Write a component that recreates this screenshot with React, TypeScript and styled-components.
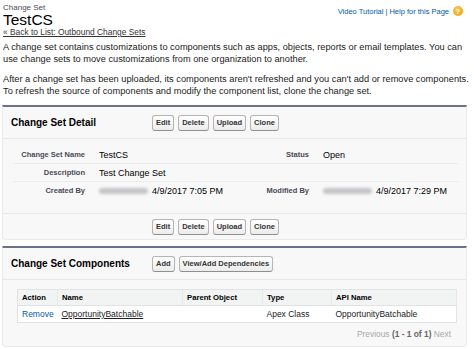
import React from "react";
import styled, { createGlobalStyle } from "styled-components";

const GlobalStyle = createGlobalStyle`
  body {
    margin: 0;
    background: #fff;
    font-family: "Liberation Sans", Arial, sans-serif;
    color: #000;
  }
`;

const detailRows = [
  { label: "Change Set Name", value: "TestCS", label2: "Status", value2: "Open" },
  { label: "Description", value: "Test Change Set", label2: "", value2: "" },
  {
    label: "Created By",
    value: "4/9/2017 7:05 PM",
    label2: "Modified By",
    value2: "4/9/2017 7:29 PM",
    blurred: true,
  },
];

const detailButtons = ["Edit", "Delete", "Upload", "Clone"];

const columns = [
  { title: "Action", width: 40 },
  { title: "Name", width: 125 },
  { title: "Parent Object", width: 80 },
  { title: "Type", width: 69 },
  { title: "API Name" },
];

const App: React.FC = () => {
  return (
    <Page>
      <GlobalStyle />
      <PageHeader>
        <div>
          <Crumb>Change Set</Crumb>
          <Title>TestCS</Title>
          <BackLink href="#">« Back to List: Outbound Change Sets</BackLink>
        </div>
        <HelpLinks>
          <HelpLink href="#">Video Tutorial</HelpLink>
          <span>|</span>
          <HelpLink href="#">Help for this Page</HelpLink>
          <HelpIcon>?</HelpIcon>
        </HelpLinks>
      </PageHeader>

      <Intro>
        A change set contains customizations to components such as apps, objects, reports or email templates. You can
        <br />
        use change sets to move customizations from one organization to another.
      </Intro>
      <Intro>
        After a change set has been uploaded, its components aren't refreshed and you can't add or remove components.
        <br />
        To refresh the source of components and modify the component list, clone the change set.
      </Intro>

      <Panel>
        <PanelHeader>
          <PanelTitle>Change Set Detail</PanelTitle>
          <ButtonGroup>
            {detailButtons.map((b) => (
              <Button key={b}>{b}</Button>
            ))}
          </ButtonGroup>
        </PanelHeader>
        <DetailBody>
          <DetailGrid>
            {detailRows.map((row, i) => {
              const last = i === detailRows.length - 1;
              return (
                <React.Fragment key={row.label}>
                  <LabelCell $last={last}>{row.label}</LabelCell>
                  <DataCell $last={last}>
                    {row.blurred && <BlurredName />}
                    {row.value}
                  </DataCell>
                  <LabelCell $last={last}>{row.label2}</LabelCell>
                  <DataCell $last={last}>
                    {row.blurred && <BlurredName />}
                    {row.value2}
                  </DataCell>
                </React.Fragment>
              );
            })}
          </DetailGrid>
        </DetailBody>
        <PanelFooter>
          <ButtonGroup>
            {detailButtons.map((b) => (
              <Button key={b}>{b}</Button>
            ))}
          </ButtonGroup>
        </PanelFooter>
      </Panel>

      <Panel $gap={6}>
        <PanelHeader>
          <PanelTitle>Change Set Components</PanelTitle>
          <ButtonGroup>
            <Button>Add</Button>
            <Button>View/Add Dependencies</Button>
          </ButtonGroup>
        </PanelHeader>
        <ListBody>
          <ListTable>
            <colgroup>
              {columns.map((c) => (
                <col key={c.title} style={c.width ? { width: c.width } : undefined} />
              ))}
            </colgroup>
            <thead>
              <tr>
                {columns.map((c) => (
                  <HeadCell key={c.title}>{c.title}</HeadCell>
                ))}
              </tr>
            </thead>
            <tbody>
              <tr>
                <Cell>
                  <ActionLink href="#">Remove</ActionLink>
                </Cell>
                <Cell>
                  <NameLink href="#">OpportunityBatchable</NameLink>
                </Cell>
                <Cell />
                <Cell>Apex Class</Cell>
                <Cell>OpportunityBatchable</Cell>
              </tr>
            </tbody>
          </ListTable>
          <Pager>
            <PagerMuted>Previous</PagerMuted> <PagerCount>(1 - 1 of 1)</PagerCount>{" "}
            <PagerMuted>Next</PagerMuted>
          </Pager>
        </ListBody>
      </Panel>
    </Page>
  );
};

export default App;

const Page = styled.div`
  width: 474px;
  box-sizing: border-box;
  padding: 0 7px 0 2px;
`;

const PageHeader = styled.div`
  display: flex;
  justify-content: space-between;
  align-items: flex-start;
  padding-left: 1px;
`;

const Crumb = styled.div`
  margin-top: 3px;
  font-size: 8px;
  line-height: 10px;
  color: #4a4a56;
`;

const Title = styled.h1`
  margin: 0;
  font-size: 15.5px;
  font-weight: normal;
  line-height: 14px;
  color: #000;
`;

const BackLink = styled.a`
  display: block;
  font-size: 8.4px;
  line-height: 10px;
  color: #333;
`;

const HelpLinks = styled.div`
  display: flex;
  align-items: center;
  gap: 2px;
  margin-top: 6px;
  margin-right: 4px;
  font-size: 7.5px;
  color: #015ba7;
`;

const HelpLink = styled.a`
  color: #015ba7;
  text-decoration: none;
`;

const HelpIcon = styled.span`
  display: inline-flex;
  align-items: center;
  justify-content: center;
  width: 10px;
  height: 10px;
  margin-left: 2px;
  border-radius: 50%;
  background: radial-gradient(circle at 40% 35%, #ffc94d, #ec9a0e);
  color: #fff;
  font-size: 7px;
  font-weight: bold;
`;

const Intro = styled.p`
  margin: 4px 0 8px 1px;
  font-size: 9.25px;
  line-height: 12px;
  color: #222;
  white-space: nowrap;
`;

const Panel = styled.section<{ $gap?: number }>`
  margin-top: ${(p) => p.$gap ?? 8}px;
  background: #f8f8f8;
  border: 1px solid #eaeaea;
  border-top: 2px solid #6c7088;
  border-radius: 0 0 4px 4px;
`;

const PanelHeader = styled.div`
  display: flex;
  align-items: center;
  height: 31px;
  padding-left: 8px;
  border-bottom: 1px solid #e8e8e8;
`;

const PanelTitle = styled.h2`
  margin: 0;
  width: 141px;
  flex-shrink: 0;
  font-size: 10px;
  font-weight: bold;
  color: #000;
`;

const ButtonGroup = styled.div`
  display: flex;
  gap: 4px;
`;

const Button = styled.button`
  height: 16px;
  padding: 0 3px;
  border: 1px solid #b5b5b5;
  border-bottom-color: #8f8f8f;
  border-radius: 3px;
  background: linear-gradient(#ffffff, #ececec);
  color: #333;
  font-family: "Liberation Sans", Arial, sans-serif;
  font-size: 7.5px;
  font-weight: bold;
  line-height: 14px;
`;

const DetailBody = styled.div`
  padding: 7px 0 13px;
`;

const DetailGrid = styled.div`
  display: grid;
  grid-template-columns: 82px 131px 93px 1fr;
  margin: 0 8px 0 10px;
`;

const LabelCell = styled.div<{ $last: boolean }>`
  height: 17px;
  padding-right: 10px;
  display: flex;
  align-items: center;
  justify-content: flex-end;
  border-bottom: 1px solid ${(p) => (p.$last ? "transparent" : "#ececec")};
  font-size: 7.5px;
  font-weight: bold;
  color: #4a4a56;
`;

const DataCell = styled.div<{ $last: boolean }>`
  height: 17px;
  padding-left: 4px;
  display: flex;
  align-items: center;
  border-bottom: 1px solid ${(p) => (p.$last ? "transparent" : "#ececec")};
  font-size: 9px;
  color: #000;
`;

const BlurredName = styled.span`
  display: inline-block;
  width: 49px;
  height: 6px;
  margin-right: 4px;
  border-radius: 3px;
  background: #c4c4c8;
  filter: blur(1.6px);
`;

const PanelFooter = styled.div`
  padding: 5px 0 4px 149px;
  border-top: 1px solid #e8e8e8;
`;

const ListBody = styled.div`
  padding: 9px 9px 7px 14px;
`;

const ListTable = styled.table`
  width: 100%;
  border-collapse: collapse;
  table-layout: fixed;
  background: #fff;
  border: 1px solid #e0e3e5;
`;

const HeadCell = styled.th`
  box-sizing: border-box;
  height: 16px;
  padding: 0 4px;
  background: #f2f3f3;
  border-bottom: 1px solid #e0e3e5;
  border-right: 1px solid #e6e8ea;
  text-align: left;
  font-size: 7.7px;
  font-weight: bold;
  color: #000;
`;

const Cell = styled.td`
  box-sizing: border-box;
  height: 17px;
  padding: 0 4px;
  font-size: 8.5px;
  color: #222;
  white-space: nowrap;
  overflow: hidden;
`;

const ActionLink = styled.a`
  color: #015ba7;
  text-decoration: none;
`;

const NameLink = styled.a`
  color: #222;
  text-decoration: underline;
`;

const Pager = styled.div`
  margin-top: 6px;
  padding-right: 6px;
  text-align: right;
  font-size: 8.4px;
  line-height: 10px;
`;

const PagerMuted = styled.span`
  color: #a8a8a8;
`;

const PagerCount = styled.span`
  color: #666;
  font-weight: bold;
`;
